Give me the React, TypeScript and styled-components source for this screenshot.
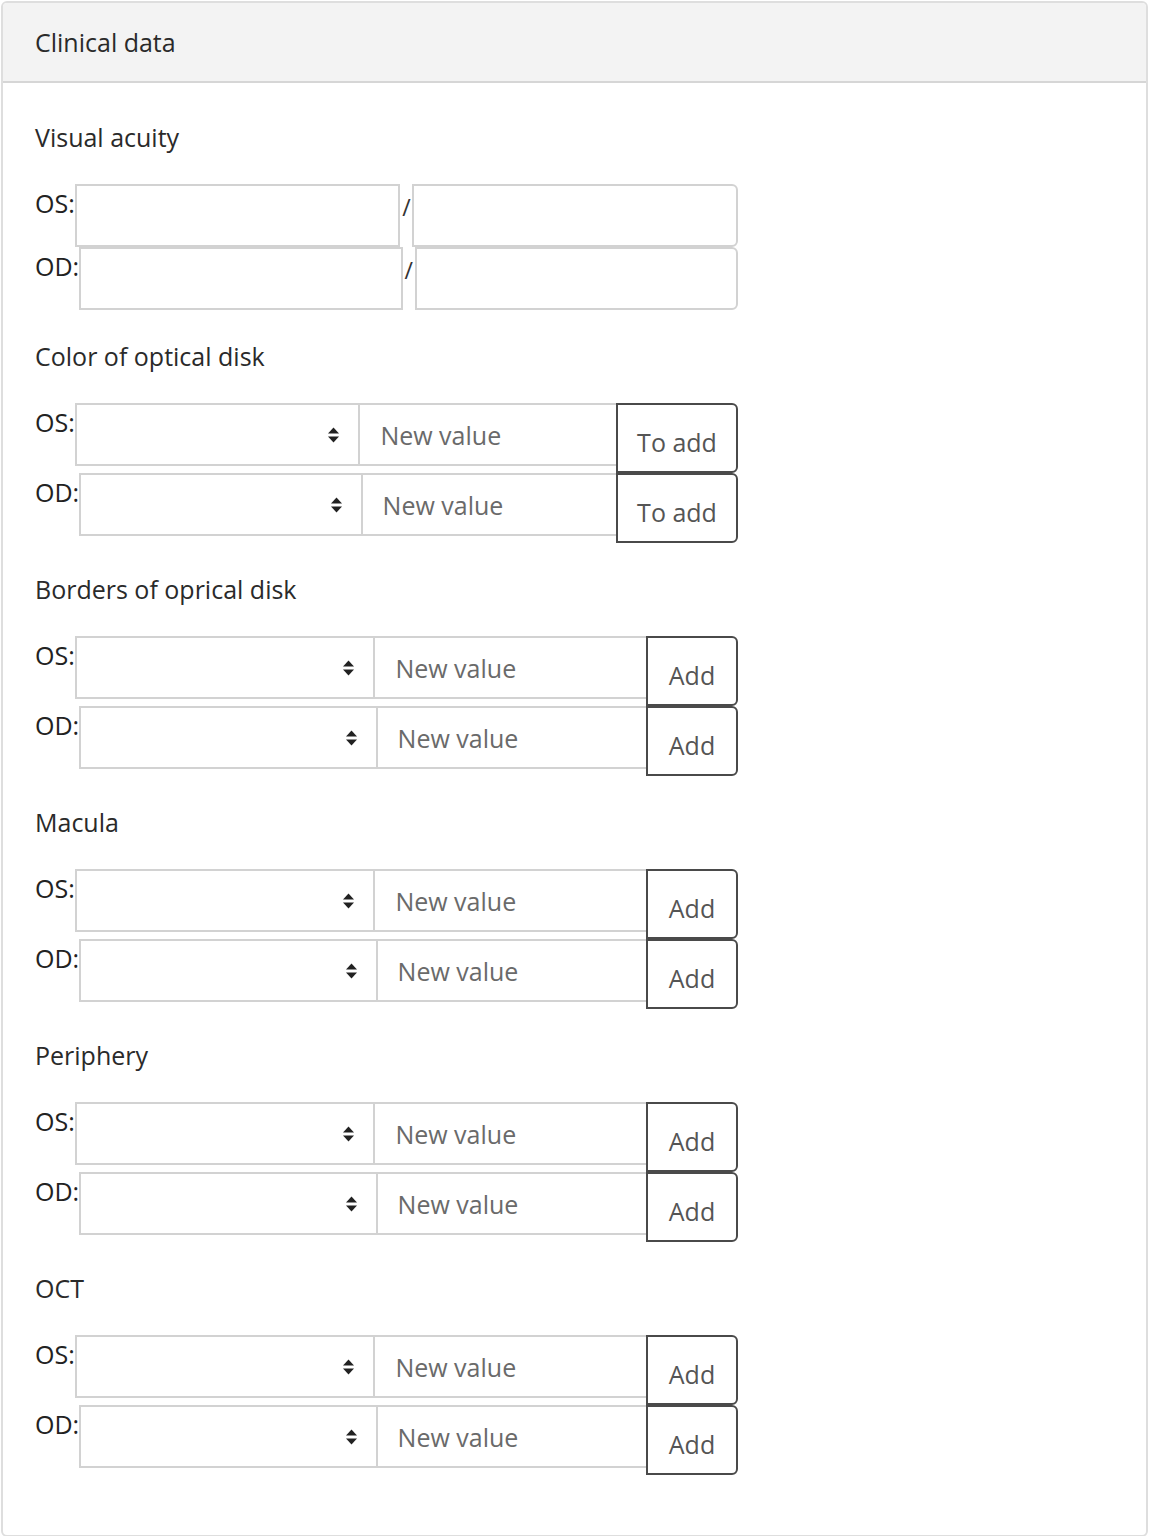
import React from 'react'
import styled, { createGlobalStyle } from 'styled-components'

const GlobalStyle = createGlobalStyle`
  * {
    box-sizing: border-box;
  }
  body {
    margin: 0;
    padding: 1px;
    background: #fff;
    font-family: 'Open Sans', 'Noto Sans', sans-serif;
    color: #222;
  }
`

type PickSection = {
  title: string
  button: string
}

const pickSections: Array<PickSection> = [
  { title: 'Color of optical disk', button: 'To add' },
  { title: 'Borders of oprical disk', button: 'Add' },
  { title: 'Macula', button: 'Add' },
  { title: 'Periphery', button: 'Add' },
  { title: 'OCT', button: 'Add' },
]

const eyes = ['OS', 'OD']

const SortArrows: React.FC = () => (
  <Arrows width="13" height="18" viewBox="0 0 13 18">
    <path d="M6.5 1.5 L12 7.5 H1 Z" fill="#222" />
    <path d="M6.5 16.5 L12 10.5 H1 Z" fill="#222" />
  </Arrows>
)

const App: React.FC = () => {
  return (
    <>
      <GlobalStyle />
      <Card>
        <CardHeader>Clinical data</CardHeader>
        <CardBody>
          <Section>
            <Heading>Visual acuity</Heading>
            {eyes.map((eye) => (
              <Row key={eye}>
                <EyeLabel>{eye}:</EyeLabel>
                <Group>
                  <TextBox />
                  <Slash>/</Slash>
                  <TextBox last />
                </Group>
              </Row>
            ))}
          </Section>

          {pickSections.map((section) => (
            <Section key={section.title}>
              <Heading>{section.title}</Heading>
              {eyes.map((eye) => (
                <Row key={eye}>
                  <EyeLabel>{eye}:</EyeLabel>
                  <Group>
                    <Select>
                      <SortArrows />
                    </Select>
                    <ValueBox>New value</ValueBox>
                    <AddButton wide={section.button === 'To add'}>
                      {section.button}
                    </AddButton>
                  </Group>
                </Row>
              ))}
            </Section>
          ))}
        </CardBody>
      </Card>
    </>
  )
}

export default App

const Card = styled.div`
  width: 1147px;
  border: 2px solid #dedede;
  border-radius: 6px;
  overflow: hidden;
`

const CardHeader = styled.div`
  height: 80px;
  padding: 0 32px;
  display: flex;
  align-items: center;
  background: #f3f3f3;
  border-bottom: 2px solid #d6d6d6;
  font-size: 25px;
  color: #2a2a2a;
`

const CardBody = styled.div`
  padding: 36px 32px 32px;
`

const Section = styled.div`
  width: 703px;
  margin-bottom: 28px;
`

const Heading = styled.div`
  height: 36px;
  line-height: 36px;
  margin-bottom: 29px;
  font-size: 25px;
  color: #2a2a2a;
`

const Row = styled.div`
  display: flex;
  align-items: flex-start;
`

const EyeLabel = styled.span`
  padding-top: 3px;
  font-size: 25px;
  line-height: 32px;
  color: #222;
`

const Group = styled.div`
  flex: 1;
  display: flex;
  align-items: flex-start;
`

const TextBox = styled.div<{ last?: boolean }>`
  flex: 1 1 0;
  height: 63px;
  border: 2px solid #d2d2d2;
  border-radius: ${(p) => (p.last ? '0 6px 6px 0' : '0')};
  background: #fff;
`

const Slash = styled.span`
  width: 12px;
  padding-top: 8px;
  text-align: center;
  font-size: 23px;
  line-height: 30px;
  color: #333;
`

const Select = styled.div`
  flex: 1 1 50px;
  height: 63px;
  display: flex;
  align-items: center;
  justify-content: flex-end;
  padding-right: 18px;
  border: 2px solid #d2d2d2;
  background: #fff;
`

const Arrows = styled.svg`
  display: block;
`

const ValueBox = styled.div`
  flex: 1 1 24px;
  height: 63px;
  display: flex;
  align-items: center;
  padding-left: 20px;
  margin-left: -2px;
  border: 2px solid #d2d2d2;
  background: #fff;
  font-size: 25px;
  color: #6a6a6a;
`

const AddButton = styled.div<{ wide?: boolean }>`
  flex: 0 0 ${(p) => (p.wide ? '122px' : '92px')};
  height: 70px;
  display: flex;
  align-items: center;
  justify-content: center;
  padding-top: 8px;
  margin-left: -2px;
  border: 2px solid #4a4a4a;
  border-radius: 0 6px 6px 0;
  background: #fff;
  font-size: 25px;
  color: #555;
`
